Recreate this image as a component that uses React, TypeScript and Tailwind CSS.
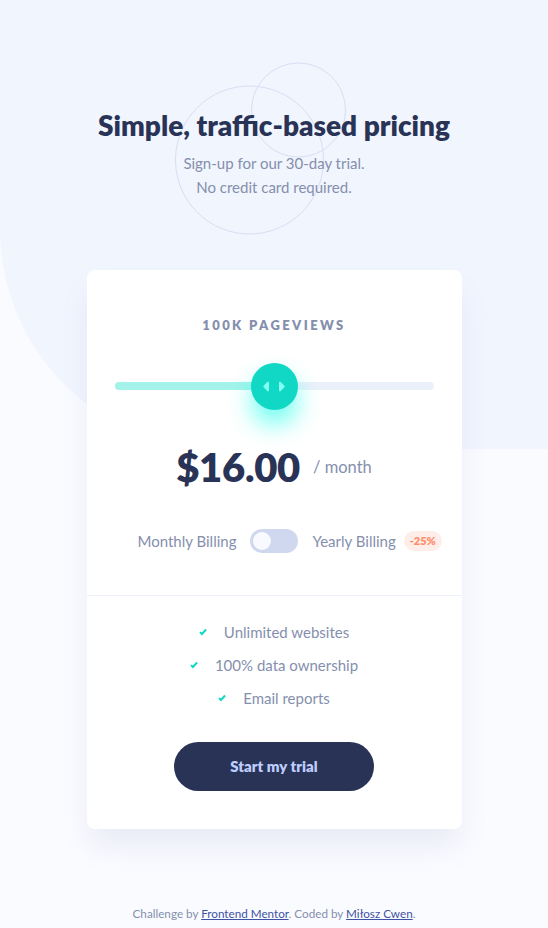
import React from "react";

function Check() {
  return (
    <svg width="9" height="8" viewBox="0 0 9 8" className="shrink-0">
      <path d="M1 4.134l1.907 1.908L7.062 1.5" fill="none" stroke="#10D8C4" strokeWidth="2" />
    </svg>
  );
}

function SliderIcon() {
  return (
    <svg width="22" height="13" viewBox="0 0 22 13">
      <path
        d="M16 2.558v7.884a1 1 0 001.735.679l3.639-3.943a1 1 0 000-1.356l-3.64-3.943A1 1 0 0016 2.558zM6 2.558v7.884a1 1 0 01-1.735.679L.626 7.178a1 1 0 010-1.356l3.64-3.943A1 1 0 016 2.558z"
        fill="#80FFF3"
      />
    </svg>
  );
}

export default function App() {
  return (
    <div className="relative min-h-[928px] w-full overflow-hidden bg-[#FAFBFF] font-['Lato',sans-serif] text-[#858FAD]">
      {/* background shape */}
      <div className="absolute left-0 top-0 h-[449px] w-full rounded-bl-[220px] bg-[#F1F5FE]" />
      {/* circles pattern */}
      <svg className="absolute left-0 top-0" width="548" height="260" viewBox="0 0 548 260">
        <circle cx="249.5" cy="160" r="74" fill="none" stroke="#D9DEF3" strokeWidth="1" />
        <circle cx="298.5" cy="110" r="47" fill="none" stroke="#D9DEF3" strokeWidth="1" />
      </svg>

      <div className="relative flex flex-col items-center">
        <header className="flex flex-col items-center pt-[107px] text-center">
          <h1 className="text-[28px] font-extrabold leading-[36px] text-[#293356]">
            Simple, traffic-based pricing
          </h1>
          <p className="mt-2 text-[15px] leading-[24px]">
            Sign-up for our 30-day trial.
            <br />
            No credit card required.
          </p>
        </header>

        <main className="mt-[71px] w-[375px] rounded-lg bg-white shadow-[0_20px_30px_-5px_rgba(127,137,185,0.15)]">
          <div className="flex flex-col items-center px-7 pt-[45px] pb-[42px]">
            <div className="text-[13px] font-extrabold leading-[20px] tracking-[2.4px]">100K PAGEVIEWS</div>
            <div className="relative mt-[28px] flex h-[46px] w-full items-center">
              <div className="flex h-2 w-full overflow-hidden rounded-full">
                <div className="h-full w-[50%] bg-[#A4F3EB]" />
                <div className="h-full flex-1 bg-[#ECF0FB]" />
              </div>
              <div className="absolute left-[136px] top-0 flex h-[47px] w-[47px] items-center justify-center rounded-full bg-[#10D8C4] shadow-[0_15px_25px_rgba(0,255,231,0.55)]">
                <SliderIcon />
              </div>
            </div>
            <div className="mt-[30px] flex h-[56px] items-center gap-[13px]">
              <span className="text-[40px] font-extrabold leading-[56px] tracking-[-0.3px] text-[#293356]">$16.00</span>
              <span className="text-[16.5px] leading-[24px]">/ month</span>
            </div>
            <div className="mt-[34px] ml-[23px] flex h-6 items-center self-start whitespace-nowrap text-[15px]">
              <span className="shrink-0">Monthly Billing</span>
              <div className="ml-[14px] flex h-6 w-12 shrink-0 items-center rounded-full bg-[#CFD8EF] pl-[3px]">
                <div className="h-[18px] w-[18px] rounded-full bg-[#F8FAFF]" />
              </div>
              <span className="ml-[14px] shrink-0">Yearly Billing</span>
              <span className="ml-2 flex h-5 w-[38px] shrink-0 items-center justify-center rounded-full bg-[#FEEDE8] text-[11px] font-extrabold text-[#FF8D68]">
                -25%
              </span>
            </div>
          </div>
          <div className="h-px w-full bg-[#ECF0FB]" />
          <div className="flex flex-col items-center px-7 pt-6 pb-[38px]">
            <ul className="flex flex-col items-center gap-[9px] text-[15px] leading-[24px]">
              <li className="flex items-center gap-[16px]">
                <Check />
                <span>Unlimited websites</span>
              </li>
              <li className="flex items-center gap-[16px]">
                <Check />
                <span>100% data ownership</span>
              </li>
              <li className="flex items-center gap-[16px]">
                <Check />
                <span>Email reports</span>
              </li>
            </ul>
            <button className="mt-8 flex h-[49px] w-[200px] items-center justify-center rounded-full bg-[#293356] text-[15px] font-extrabold text-[#BECDFF]">
              Start my trial
            </button>
          </div>
        </main>

        <footer className="mt-[76px] text-center text-[11.7px] leading-[16px]">
          Challenge by{" "}
          <a href="#" className="text-[#3E52A3] underline">
            Frontend Mentor
          </a>
          . Coded by{" "}
          <a href="#" className="text-[#3E52A3] underline">
            Miłosz Cwen
          </a>
          .
        </footer>
      </div>
    </div>
  );
}
